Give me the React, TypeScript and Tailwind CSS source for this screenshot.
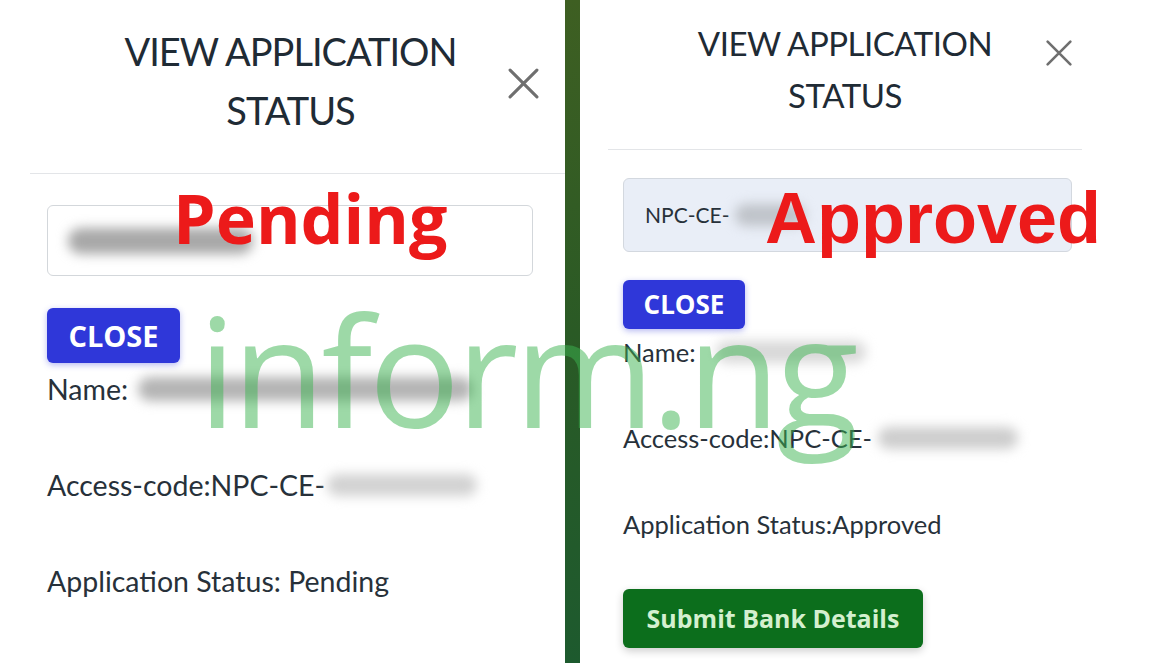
import * as React from "react";

const BODY = { fontFamily: "Lato, 'Open Sans', sans-serif" };
const BTN = { fontFamily: "'Open Sans', 'Noto Sans', sans-serif" };

const CloseIcon = ({ size }: { size: number }) => (
  <svg width={size} height={size} viewBox="0 0 32 32" fill="none">
    <path d="M3 3L29 29M29 3L3 29" stroke="#6f6f6f" strokeWidth="3" strokeLinecap="round" />
  </svg>
);

const Blur = ({ className }: { className: string }) => (
  <span className={`inline-block rounded-full blur-[6px] align-middle ${className}`} />
);

function PendingPanel() {
  return (
    <div className="flex w-[565px] shrink-0 flex-col bg-white text-[#27313a]" style={BODY}>
      <div className="relative ml-[30px] border-b border-[#e3e5e8] pb-[33px] pr-[14px] pt-[22px] text-center">
        <div className="text-[38px] leading-[59px] tracking-[-1px] text-[#1f2b35]">
          VIEW APPLICATION
          <br />
          STATUS
        </div>
        <div className="absolute right-[25px] top-[67px]">
          <CloseIcon size={33} />
        </div>
      </div>

      <div className="flex flex-col px-[47px]">
        <div className="mt-[31px] flex h-[71px] w-[486px] items-center rounded-md border border-[#d3d7db] bg-white pl-[20px]">
          <Blur className="h-[26px] w-[185px] bg-[#a8a8a8]" />
        </div>

        <button className="mt-[32px] h-[55px] w-[133px] rounded-md bg-[#2f37d9] text-[29px] font-bold text-white shadow-[0_2px_6px_rgba(47,55,217,0.35)]" style={BTN}>
          CLOSE
        </button>

        <div className="mt-[11px] flex h-[30px] items-center text-[28.5px] leading-[30px]">
          Name:
          <Blur className="ml-[10px] h-[24px] w-[335px] bg-[#b4b4b4]" />
        </div>
        <div className="mt-[66px] flex h-[30px] items-center text-[28.5px] leading-[30px]">
          Access-code:NPC-CE-
          <Blur className="ml-[2px] h-[22px] w-[150px] bg-[#d2d2d2]" />
        </div>
        <div className="mt-[66px] h-[30px] text-[28.5px] leading-[30px]">Application Status: Pending</div>
      </div>
    </div>
  );
}

function ApprovedPanel() {
  return (
    <div className="flex flex-1 flex-col bg-white text-[#27313a]" style={BODY}>
      <div className="relative ml-[28px] w-[474px] border-b border-[#e3e5e8] pb-[28px] pt-[17px] text-center">
        <div className="text-[33px] leading-[52px] tracking-[-0.5px] text-[#1f2b35]">
          VIEW APPLICATION
          <br />
          STATUS
        </div>
        <div className="absolute right-[9px] top-[39px]">
          <CloseIcon size={28} />
        </div>
      </div>

      <div className="flex flex-col px-[43px]">
        <div className="mt-[28px] flex h-[74px] w-[449px] items-center rounded-md border border-[#d3d8df] bg-[#e9eef7] pl-[21px] text-[21px]">
          NPC-CE-
          <Blur className="ml-[6px] h-[22px] w-[70px] bg-[#bfc3c9]" />
        </div>

        <button className="mt-[28px] h-[49px] w-[122px] rounded-md bg-[#2f37d9] text-[26px] font-bold text-white shadow-[0_2px_6px_rgba(47,55,217,0.35)]" style={BTN}>
          CLOSE
        </button>

        <div className="mt-[9px] flex h-[28px] items-center text-[25.5px] leading-[28px]">
          Name:
          <Blur className="ml-[20px] h-[22px] w-[150px] bg-[#d8d8d8]" />
        </div>
        <div className="mt-[58px] flex h-[28px] items-center text-[25.5px] leading-[28px]">
          Access-code:NPC-CE-
          <Blur className="ml-[6px] h-[22px] w-[140px] bg-[#cdcdcd]" />
        </div>
        <div className="mt-[58px] h-[28px] text-[25.5px] leading-[28px]">Application Status:Approved</div>

        <button className="mt-[51px] h-[59px] w-[300px] rounded-md bg-[#0c6e1c] text-[25px] font-bold text-[#d4f0cf] shadow-[0_3px_8px_rgba(0,0,0,0.2)]" style={BTN}>
          Submit Bank Details
        </button>
      </div>
    </div>
  );
}

export default function App() {
  return (
    <div className="relative flex h-[663px] w-[1170px] overflow-hidden bg-white">
      <PendingPanel />
      <div className="w-[15px] shrink-0 bg-gradient-to-b from-[#3e5f22] via-[#2a5a25] to-[#1d5a2e]" />
      <ApprovedPanel />

      {/* overlays: status stamps and site watermark */}
      <div className="pointer-events-none absolute left-[173px] top-[184px] text-[68px] font-bold leading-none text-[#ec1a1a]" style={BTN}>
        Pending
      </div>
      <div className="pointer-events-none absolute left-[765px] top-[182px] text-[72px] font-bold leading-none text-[#ec1a1a]" style={{ fontFamily: "'Liberation Sans', Arial, sans-serif" }}>
        Approved
      </div>
      <div className="pointer-events-none absolute left-[198px] top-[294px] text-[152px] leading-none tracking-[-4px] text-[rgba(60,180,80,0.5)]" style={BTN}>
        inform.ng
      </div>
    </div>
  );
}
